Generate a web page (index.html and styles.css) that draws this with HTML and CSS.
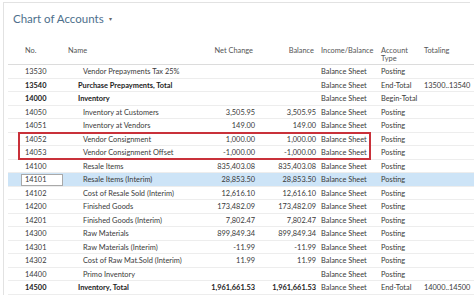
FILE: index.html
```html
<!DOCTYPE html>
<html>
<head>
<meta charset="utf-8">
<link rel="stylesheet" href="styles.css">
</head>
<body>
<div class="frame">
  <div class="title">Chart of Accounts <span class="caret">&#9662;</span></div>
  <div class="grid">
    <div class="row head">
      <div class="c no">No.</div>
      <div class="c name">Name</div>
      <div class="c num">Net Change</div>
      <div class="c num">Balance</div>
      <div class="c ib">Income/Balance</div>
      <div class="c at">Account<br>Type</div>
      <div class="c tot">Totaling</div>
    </div>
    <div class="row"><div class="c no">13530</div><div class="c name l1">Vendor Prepayments Tax 25%</div><div class="c num"></div><div class="c num"></div><div class="c ib">Balance Sheet</div><div class="c at">Posting</div><div class="c tot"></div></div>
    <div class="row b"><div class="c no">13540</div><div class="c name">Purchase Prepayments, Total</div><div class="c num"></div><div class="c num"></div><div class="c ib">Balance Sheet</div><div class="c at">End-Total</div><div class="c tot">13500..13540</div></div>
    <div class="row b"><div class="c no">14000</div><div class="c name">Inventory</div><div class="c num"></div><div class="c num"></div><div class="c ib">Balance Sheet</div><div class="c at">Begin-Total</div><div class="c tot"></div></div>
    <div class="row"><div class="c no">14050</div><div class="c name l1">Inventory at Customers</div><div class="c num">3,505.95</div><div class="c num">3,505.95</div><div class="c ib">Balance Sheet</div><div class="c at">Posting</div><div class="c tot"></div></div>
    <div class="row"><div class="c no">14051</div><div class="c name l1">Inventory at Vendors</div><div class="c num">149.00</div><div class="c num">149.00</div><div class="c ib">Balance Sheet</div><div class="c at">Posting</div><div class="c tot"></div></div>
    <div class="boxed">
      <div class="row"><div class="c no">14052</div><div class="c name l1">Vendor Consignment</div><div class="c num">1,000.00</div><div class="c num">1,000.00</div><div class="c ib">Balance Sheet</div><div class="c at">Posting</div><div class="c tot"></div></div>
      <div class="row"><div class="c no">14053</div><div class="c name l1">Vendor Consignment Offset</div><div class="c num">-1,000.00</div><div class="c num">-1,000.00</div><div class="c ib">Balance Sheet</div><div class="c at">Posting</div><div class="c tot"></div></div>
      <div class="redbox"></div>
    </div>
    <div class="row"><div class="c no">14100</div><div class="c name l1">Resale Items</div><div class="c num">835,403.08</div><div class="c num">835,403.08</div><div class="c ib">Balance Sheet</div><div class="c at">Posting</div><div class="c tot"></div></div>
    <div class="row sel"><div class="c no"><span class="focus">14101</span></div><div class="c name l1">Resale Items (Interim)</div><div class="c num">28,853.50</div><div class="c num">28,853.50</div><div class="c ib">Balance Sheet</div><div class="c at">Posting</div><div class="c tot"></div></div>
    <div class="row"><div class="c no">14102</div><div class="c name l1">Cost of Resale Sold (Interim)</div><div class="c num">12,616.10</div><div class="c num">12,616.10</div><div class="c ib">Balance Sheet</div><div class="c at">Posting</div><div class="c tot"></div></div>
    <div class="row"><div class="c no">14200</div><div class="c name l1">Finished Goods</div><div class="c num">173,482.09</div><div class="c num">173,482.09</div><div class="c ib">Balance Sheet</div><div class="c at">Posting</div><div class="c tot"></div></div>
    <div class="row"><div class="c no">14201</div><div class="c name l1">Finished Goods (Interim)</div><div class="c num">7,802.47</div><div class="c num">7,802.47</div><div class="c ib">Balance Sheet</div><div class="c at">Posting</div><div class="c tot"></div></div>
    <div class="row"><div class="c no">14300</div><div class="c name l1">Raw Materials</div><div class="c num">899,849.34</div><div class="c num">899,849.34</div><div class="c ib">Balance Sheet</div><div class="c at">Posting</div><div class="c tot"></div></div>
    <div class="row"><div class="c no">14301</div><div class="c name l1">Raw Materials (Interim)</div><div class="c num">-11.99</div><div class="c num">-11.99</div><div class="c ib">Balance Sheet</div><div class="c at">Posting</div><div class="c tot"></div></div>
    <div class="row"><div class="c no">14302</div><div class="c name l1">Cost of Raw Mat.Sold (Interim)</div><div class="c num">11.99</div><div class="c num">11.99</div><div class="c ib">Balance Sheet</div><div class="c at">Posting</div><div class="c tot"></div></div>
    <div class="row"><div class="c no">14400</div><div class="c name l1">Primo Inventory</div><div class="c num"></div><div class="c num"></div><div class="c ib">Balance Sheet</div><div class="c at">Posting</div><div class="c tot"></div></div>
    <div class="row b"><div class="c no">14500</div><div class="c name">Inventory, Total</div><div class="c num">1,961,661.53</div><div class="c num">1,961,661.53</div><div class="c ib">Balance Sheet</div><div class="c at">End-Total</div><div class="c tot">14000..14500</div></div>
  </div>
</div>
</body>
</html>
```

FILE: styles.css
```css
html, body {
  margin: 0;
  padding: 0;
  background: #fff;
  overflow: hidden;
}
body {
  width: 474px;
  height: 295px;
  font-family: "Lato", "Open Sans", sans-serif;
  color: #3a3a3a;
}
.frame {
  margin: 2px 4px 0 3px;
  border-top: 1px solid #e2e2e2;
  border-left: 1px solid #e2e2e2;
  height: 300px;
  padding-left: 4px;
}
.title {
  font-size: 11.5px;
  font-weight: 400;
  color: #4d6f8c;
  padding: 9px 0 0 5px;
  height: 32px;
  box-sizing: border-box;
}
.caret {
  font-size: 6px;
  color: #666;
  vertical-align: 2px;
  margin-left: 2px;
}
.grid {
  font-size: 7.4px;
  margin-right: -4px;
}
.row {
  display: grid;
  grid-template-columns: 60px 127px 60px 61px 65px 43px 1fr;
  height: 13.53px;
  line-height: 13px;
  border-bottom: 1px solid #ededed;
  box-sizing: border-box;
  white-space: nowrap;
}
.row.head {
  color: #555;
  border-bottom: 1px solid #dcdcdc;
  padding-top: 12px;
  line-height: 8px;
  box-sizing: content-box;
  height: 17px;
}
.c { overflow: visible; }
.no { padding-left: 17px; }
.name { padding-left: 10px; }
.head .name { padding-left: 0; }
.name.l1 { padding-left: 15px; }
.num { text-align: right; }
.head .num { padding-right: 2px; }
.ib { padding-left: 5px; }
.b { font-weight: bold; color: #222; }
.b .ib, .b .at, .b .tot { font-weight: normal; color: #3a3a3a; }
.sel { background: #cde4f7; }
.focus {
  display: inline-block;
  background: #fff;
  border: 1px solid #a9a9a9;
  width: 42px;
  height: 12px;
  line-height: 10px;
  margin-left: -4px;
  padding-left: 3px;
  box-sizing: border-box;
  vertical-align: 0;
}
.boxed { position: relative; }
.redbox {
  position: absolute;
  left: 10px;
  top: -1px;
  width: 353px;
  height: 28px;
  border: 2px solid #c9313a;
  box-sizing: border-box;
  pointer-events: none;
}
```
